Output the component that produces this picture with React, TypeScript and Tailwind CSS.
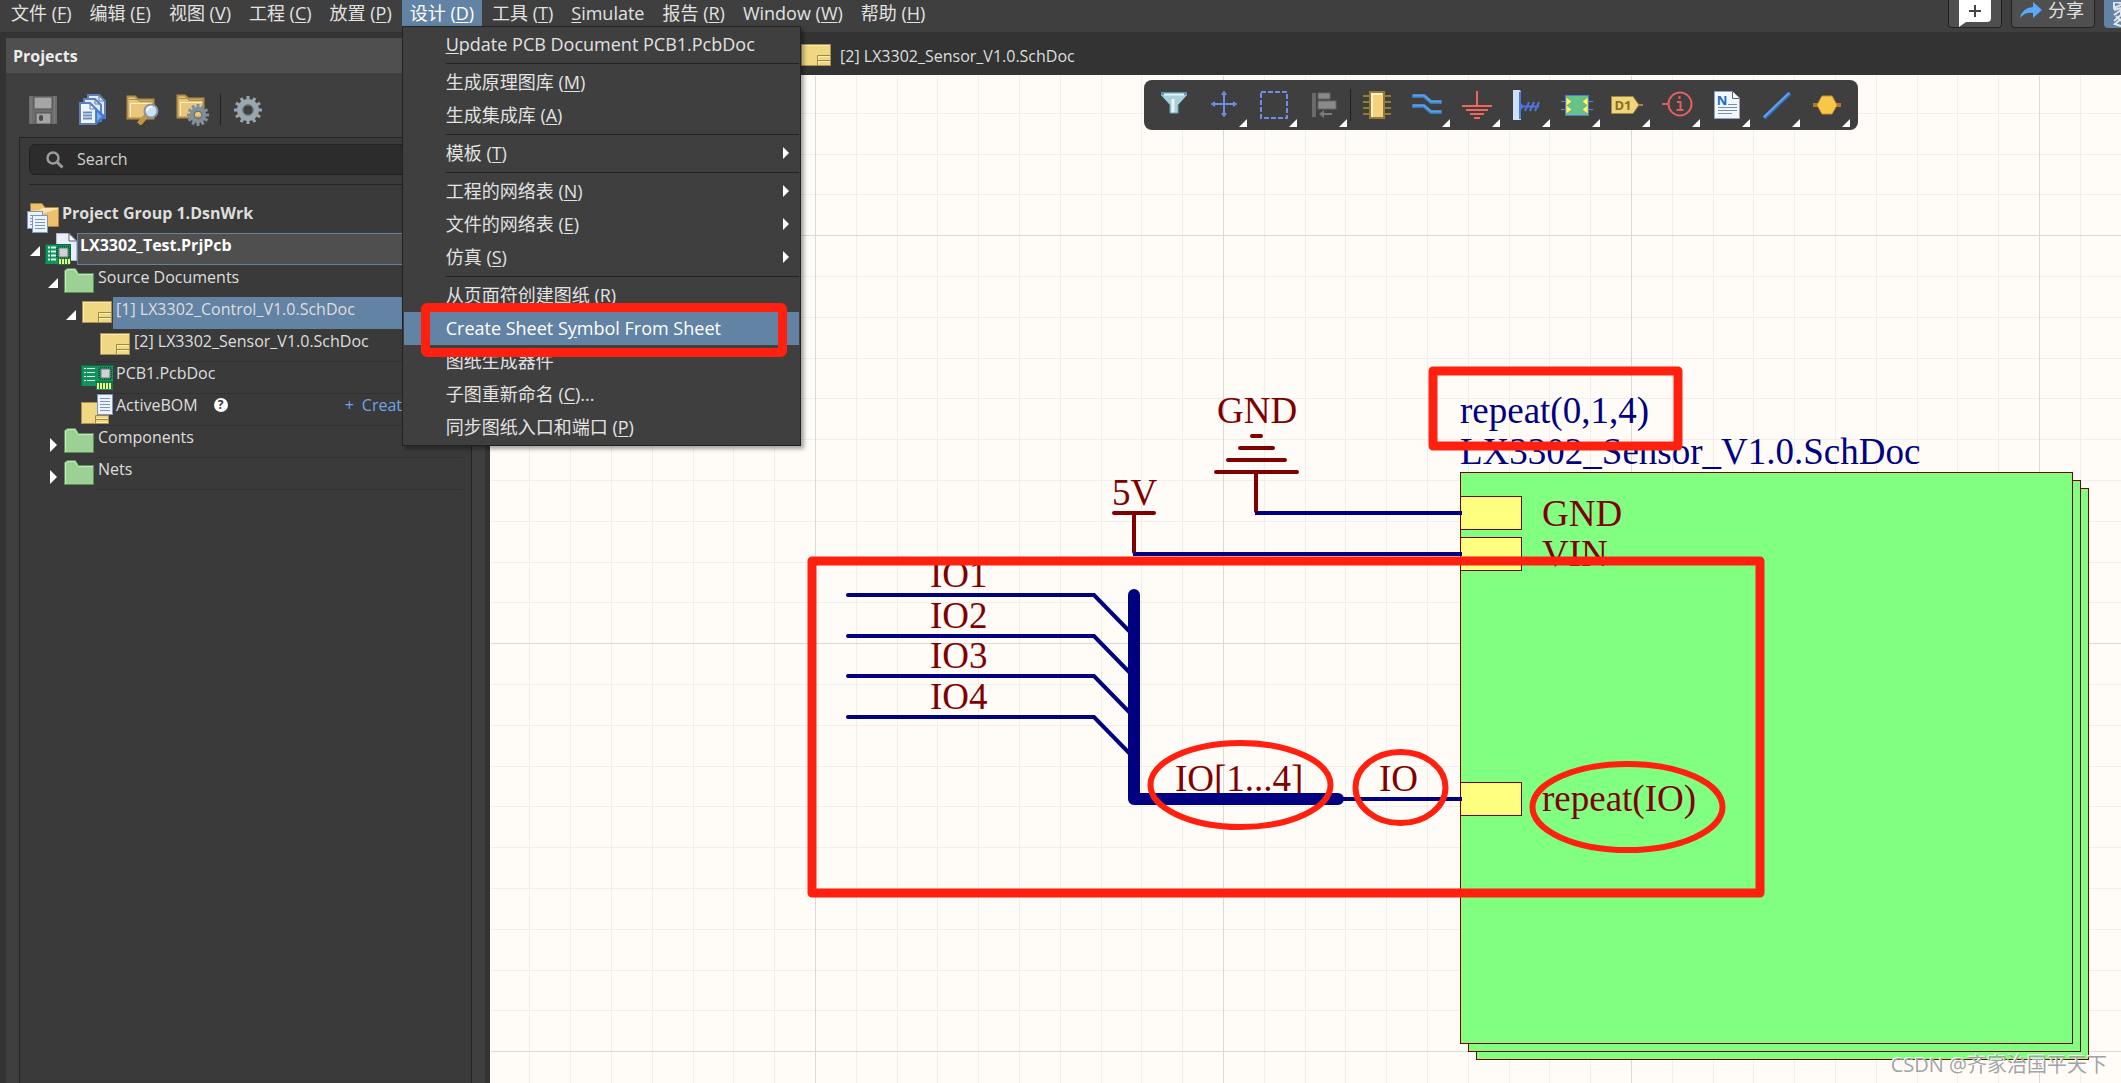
import type { ReactNode } from "react";

/* ---------- data ---------- */

type MenuEntry =
  | { kind: "sep" }
  | { kind: "item"; before: string; key?: string; after?: string; sub?: boolean; active?: boolean };

const menuBar = [
  { before: "文件 (", key: "F", after: ")" },
  { before: "编辑 (", key: "E", after: ")" },
  { before: "视图 (", key: "V", after: ")" },
  { before: "工程 (", key: "C", after: ")" },
  { before: "放置 (", key: "P", after: ")" },
  { before: "设计 (", key: "D", after: ")", open: true },
  { before: "工具 (", key: "T", after: ")" },
  { before: "", key: "S", after: "imulate" },
  { before: "报告 (", key: "R", after: ")" },
  { before: "Window (", key: "W", after: ")" },
  { before: "帮助 (", key: "H", after: ")" },
];

const designMenu: MenuEntry[] = [
  { kind: "item", before: "", key: "U", after: "pdate PCB Document PCB1.PcbDoc" },
  { kind: "sep" },
  { kind: "item", before: "生成原理图库 (", key: "M", after: ")" },
  { kind: "item", before: "生成集成库 (", key: "A", after: ")" },
  { kind: "sep" },
  { kind: "item", before: "模板 (", key: "T", after: ")", sub: true },
  { kind: "sep" },
  { kind: "item", before: "工程的网络表 (", key: "N", after: ")", sub: true },
  { kind: "item", before: "文件的网络表 (", key: "E", after: ")", sub: true },
  { kind: "item", before: "仿真 (", key: "S", after: ")", sub: true },
  { kind: "sep" },
  { kind: "item", before: "从页面符创建图纸 (", key: "R", after: ")" },
  { kind: "item", before: "Create Sheet S", key: "y", after: "mbol From Sheet", active: true },
  { kind: "item", before: "图纸生成器件" },
  { kind: "item", before: "子图重新命名 (", key: "C", after: ")..." },
  { kind: "item", before: "同步图纸入口和端口 (", key: "P", after: ")" },
];

/* ---------- panel icons ---------- */

function SheetIcon() {
  return (
    <svg width="32" height="32" viewBox="0 0 32 32" aria-hidden="true">
      <rect x="1.5" y="4.5" width="29" height="21" fill="#f0d784" stroke="#ab9250" />
      <path d="M2.500 24.500V5.500H29.500" fill="none" stroke="#fbe9ad" />
      <path d="M17.500 25.500V15.500H30.500M17.500 20.500H30.500" fill="none" stroke="#a1873f" />
      <path d="M18.500 19.500V16.500H29.500M18.500 24.500V21.500H29.500" fill="none" stroke="#ffefb8" />
    </svg>
  );
}

function FolderIcon() {
  return (
    <svg width="32" height="32" viewBox="0 0 32 32" aria-hidden="true">
      <path d="M1.500 27.500V5.500L4.500 3.500H12.500L15.500 8.500H30.500V27.500Z" fill="#9bd193" stroke="#5d8f58" />
      <path d="M2.500 27V6L5 4.500H12L15 9.500H30" fill="none" stroke="#c9ebc3" />
    </svg>
  );
}

function BoardArt({ wide }: { wide?: boolean }) {
  const w = wide ? 32 : 26;
  return (
    <g>
      <path d={wide ? "M0 0H32V25H15V21H0Z" : "M0 0H26V19H24V20H0Z"} fill="#12925c" />
      <path d={wide ? "M.5 20.500V.5H31.500" : "M.5 19V.5H25.500V18"} fill="none" stroke="#0a6b42" />
      {[4, 8, 12, 16].map((y) => (
        <path key={y} d={`M3 ${y - 0.5}h2M6 ${y - 0.5}h${wide ? 8 : 5}`} stroke="#e2f6ea" strokeWidth={wide ? 1 : 2} />
      ))}
      <path d={`M${w - 13} 3h12M${w - 13} 14h12M${w - 14} 4v10M${w - 2} 4v10`} stroke="#0b4f33" strokeWidth="2" strokeDasharray="1 1" />
      <rect x={w - 12} y="4" width="9" height="9" fill="#cfd2d4" stroke="#6d7a75" />
      <rect x={w - (wide ? 17 : 13)} y="16" width={wide ? 17 : 12} height={wide ? 8 : 5} fill="#0d7a4b" />
      {(wide ? [-4, -1, 2, 5, 8] : [0, 3, 6, 9]).map((dx) => (
        <rect key={dx} x={w - 12 + dx} y={wide ? 18 : 15} width="2" height={wide ? 6 : 5} fill="#f3f07b" />
      ))}
    </g>
  );
}

function BoardIcon() {
  return (
    <svg width="32" height="32" viewBox="0 0 32 32" aria-hidden="true">
      <g transform="translate(0 4)">
        <BoardArt wide />
      </g>
    </svg>
  );
}

function ProjectIcon() {
  return (
    <svg width="32" height="32" viewBox="0 0 32 32" aria-hidden="true">
      <path d="M11.500 .5H24L31.500 8V27.500H11.500Z" fill="#e9eef8" stroke="#b5b9cc" />
      <path d="M24 .5V8H31.500Z" fill="#ffffff" stroke="#5a5f77" />
      <g transform="translate(0 11)">
        <BoardArt />
      </g>
    </svg>
  );
}

function PageLines({ x, y, w, h }: { x: number; y: number; w: number; h: number }) {
  const rows = [4, 7, 10, 13, 16].filter((d) => d < h - 2);
  return (
    <g>
      <rect x={x + 0.5} y={y + 0.5} width={w} height={h} fill="#eaf3fc" stroke="#8095bd" />
      {rows.map((d) => (
        <path key={d} d={`M${x + 3} ${y + d}.5h${w - 5}`} stroke="#7f95b9" />
      ))}
    </g>
  );
}

function GroupIcon() {
  return (
    <svg width="32" height="32" viewBox="0 0 32 32" aria-hidden="true">
      <path d="M3.500 25.500V2.500H15L18 6.500H31.500V25.500Z" fill="#efc06b" stroke="#a8843f" />
      <path d="M4 10L12 9L16 7H31V8L14 13H4Z" fill="#fbe3ae" />
      <PageLines x={0} y={10} w={15} h={17} />
      <PageLines x={5} y={14} w={15} h={17} />
    </svg>
  );
}

function BomIcon() {
  return (
    <svg width="32" height="32" viewBox="0 0 32 32" aria-hidden="true">
      <rect x=".5" y="9.500" width="27" height="21" fill="#f0d784" stroke="#ab9250" />
      <path d="M14.500 30V22.500H27.500M14.500 26.500H27.500" fill="none" stroke="#a1873f" />
      <path d="M15.500 25.500H27M15.500 29.500H27" stroke="#ffefb8" />
      <PageLines x={16} y={1} w={15} h={20} />
    </svg>
  );
}

function Gear({ cx, cy, r, color }: { cx: number; cy: number; r: number; color: string }) {
  return (
    <g>
      {Array.from({ length: 12 }, (_, i) => (
        <rect key={i} x={cx - 1.500} y={cy - r - 3} width="3" height="4" fill={color} transform={`rotate(${i * 30} ${cx} ${cy})`} />
      ))}
      <circle cx={cx} cy={cy} r={r * 0.72} fill="none" stroke={color} strokeWidth={r * 0.56} />
      <circle cx={cx} cy={cy} r={r * 0.48} fill="none" stroke="#5d6a72" strokeWidth="1" />
    </g>
  );
}

function FolderArt() {
  return (
    <g>
      <path d="M1.500 23.500V1.500H9L12 4.500H27.500V23.500Z" fill="#e9c67e" stroke="#b18f4a" strokeWidth="2" />
      <path d="M4.500 22V8.500H26" fill="none" stroke="#fff0c4" />
      <path d="M3 4.500H12L13 6.500H27" fill="none" stroke="#b18f4a" />
    </g>
  );
}

/* ---------- tree ---------- */

type Row = {
  label: ReactNode;
  icon: ReactNode;
  pad: string;
  caret?: "open" | "closed" | "blank";
  look?: string;
  line?: boolean;
  extra?: ReactNode;
};

const rows: Row[] = [
  { label: "Project Group 1.DsnWrk", icon: <GroupIcon />, pad: "pl-[7px]", look: "font-bold" },
  {
    label: "LX3302_Test.PrjPcb",
    icon: <ProjectIcon />,
    pad: "pl-[10px]",
    caret: "open",
    look: "bg-[#4f4f4f] font-bold text-white ring-1 ring-[#6283a4] ring-inset",
  },
  { label: "Source Documents", icon: <FolderIcon />, pad: "pl-[28px]", caret: "open" },
  { label: "[1] LX3302_Control_V1.0.SchDoc", icon: <SheetIcon />, pad: "pl-[46px]", caret: "open", look: "bg-[#6283a4]" },
  { label: "[2] LX3302_Sensor_V1.0.SchDoc", icon: <SheetIcon />, pad: "pl-[64px]", caret: "blank", line: true },
  { label: "PCB1.PcbDoc", icon: <BoardIcon />, pad: "pl-[46px]", caret: "blank", line: true },
  {
    label: "ActiveBOM",
    icon: <BomIcon />,
    pad: "pl-[46px]",
    caret: "blank",
    line: true,
    extra: (
      <>
        <button
          type="button"
          aria-label="About ActiveBOM"
          className="mt-[5px] ml-4 flex size-[14px] items-center justify-center rounded-full bg-white text-xs leading-none font-bold text-[#333]"
        >
          ?
        </button>
        <a href="#create" className="mr-[60px] ml-auto flex gap-2 text-[#6fa5e8]">
          <span>+</span>
          Create
        </a>
      </>
    ),
  },
  { label: "Components", icon: <FolderIcon />, pad: "pl-[28px]", caret: "closed", line: true },
  { label: "Nets", icon: <FolderIcon />, pad: "pl-[28px]", caret: "closed", line: true },
];

function TreeRow({ row }: { row: Row }) {
  return (
    <li className={`relative flex h-8 items-start ${row.pad}`}>
      {row.caret && (
        <span className="flex h-8 w-[15px] shrink-0 items-center">
          {row.caret === "open" && (
            <svg width="10" height="10" className="mt-1" aria-hidden="true">
              <path d="M10 0V10H0Z" fill="#fff" />
            </svg>
          )}
          {row.caret === "closed" && (
            <svg width="9" height="14" className="mt-2" aria-hidden="true">
              <path d="M2 0L9 7L2 14Z" fill="#fff" />
            </svg>
          )}
        </span>
      )}
      <span className="w-8 shrink-0">{row.icon}</span>
      <span className={`flex h-8 min-w-0 flex-1 items-start pl-[3px] leading-6 whitespace-nowrap ${row.look ?? ""}`}>
        {row.label}
        {row.extra}
      </span>
      {row.line && <span className="absolute right-2 -bottom-px left-[75px] h-px bg-[#323232]" />}
    </li>
  );
}

function IconButton({ label, children }: { label: string; children: ReactNode }) {
  return (
    <button type="button" aria-label={label} className="flex w-[50px] shrink-0 items-center justify-center">
      {children}
    </button>
  );
}

function ProjectsPanel() {
  return (
    <aside className="flex w-[490px] shrink-0 bg-[#333] pt-[6px] pr-[5px] pl-[6px] text-[#dedede]">
      <div className="flex min-w-0 flex-1 flex-col bg-[#3f3f3f]">
        <h2 className="h-[35px] bg-[#4f4f4f] pl-[7px] text-base leading-9 font-bold text-[#ececec]">Projects</h2>
        <div className="flex h-[64px] items-center pt-[10px] pl-3">
          <IconButton label="Save">
            <svg width="28" height="28" viewBox="0 0 28 28" aria-hidden="true">
              <rect width="28" height="28" fill="#6c6c6c" />
              <rect x="5" y="1" width="18" height="12" fill="#a5a5a5" stroke="#505050" />
              <rect x="7" y="17" width="15" height="11" fill="#a5a5a5" stroke="#505050" />
              <rect x="10" y="19" width="4" height="6" rx="2" fill="#4a4a4a" />
              <path d="M2 1V27M25.500 1V27" stroke="#808080" />
            </svg>
          </IconButton>
          <IconButton label="Compile">
            <svg width="28" height="32" viewBox="0 0 28 32" aria-hidden="true">
              <path d="M9 1H20L26 7V24H9Z" fill="#dfeafa" stroke="#5d80b8" strokeWidth="2" />
              <path d="M5 5H16L22 11V27H5Z" fill="#dfeafa" stroke="#5d80b8" strokeWidth="2" />
              <path d="M1 9H11L17 15V30H1Z" fill="#eef5ff" stroke="#5d80b8" strokeWidth="2" />
              <path d="M11 9V15H17M16 5V10H22M20 1V7H26" fill="none" stroke="#5d80b8" />
              <path d="M4 18.500H13M4 21.500H13M4 24.500H13" stroke="#6a8cc4" strokeWidth="2" />
              <path d="M17 14L27 22.500L17 31Z" fill="#3f7ad0" />
              <path d="M18 18L23 22.500L18 27Z" fill="#7ba9e8" />
            </svg>
          </IconButton>
          <IconButton label="Explore folder">
            <svg width="34" height="30" viewBox="0 0 34 30" aria-hidden="true">
              <FolderArt />
              <path d="M13 29L21 20" stroke="#c29545" strokeWidth="5" />
              <circle cx="25" cy="16" r="6.500" fill="#cfe0f2" stroke="#8296a8" strokeWidth="2" />
              <path d="M21 16A4 4 0 0 1 26 12" fill="none" stroke="#fff" strokeWidth="2" />
            </svg>
          </IconButton>
          <IconButton label="Folder options">
            <svg width="34" height="32" viewBox="0 0 34 32" aria-hidden="true">
              <FolderArt />
              <Gear cx={22} cy={21} r={8} color="#81909a" />
            </svg>
          </IconButton>
          <span className="mx-[2px] h-8 w-px bg-[#222]" />
          <IconButton label="Settings">
            <svg width="28" height="28" viewBox="0 0 28 28" aria-hidden="true">
              <Gear cx={14} cy={14} r={11} color="#9aa5ad" />
            </svg>
          </IconButton>
        </div>
        <div className="mr-[13px] ml-[13px] flex-1 border border-b-0 border-[#242424] bg-[#3a3a3a]">
          <label className="mt-[6px] mr-2 ml-[9px] flex h-[31px] items-center rounded-md border border-[#222] bg-[#2c2c2c] pl-4">
            <svg width="18" height="18" viewBox="0 0 18 18" aria-hidden="true">
              <circle cx="7" cy="7" r="5.500" fill="none" stroke="#9b9b9b" strokeWidth="2.500" />
              <path d="M11 11L16.500 16.500" stroke="#9b9b9b" strokeWidth="3" />
            </svg>
            <input
              type="text"
              aria-label="Search"
              placeholder="Search"
              className="mb-[2px] ml-[13px] min-w-0 flex-1 bg-transparent text-base text-[#dedede] outline-none placeholder:text-[#d0d0d0]"
            />
          </label>
          <div className="mt-[9px] mr-2 ml-[9px] h-px bg-[#242424]" />
          <ul className="mt-4 text-base">
            {rows.map((row, i) => (
              <TreeRow key={i} row={row} />
            ))}
          </ul>
        </div>
      </div>
    </aside>
  );
}

/* ---------- menus ---------- */

function DesignMenu() {
  return (
    <div className="absolute top-[26px] left-0 z-20 w-[399px] border border-[#222] bg-[#3f3f3f] p-px shadow-[3px_3px_4px_rgba(0,0,0,0.35)]">
      <ul>
        {designMenu.map((entry, i) =>
          entry.kind === "sep" ? (
            <li key={i} className="flex h-[5px] items-center pl-[42px]">
              <span className="h-px w-full bg-[#222]" />
            </li>
          ) : (
            <li key={i}>
              <button
                type="button"
                className={`flex h-[33px] w-full items-center justify-between pr-[10px] pb-px pl-[42px] text-left whitespace-nowrap ${
                  entry.active ? "bg-[#6283a4] text-white" : ""
                }`}
              >
                <span>
                  {entry.before}
                  {entry.key && <u className="underline-offset-2">{entry.key}</u>}
                  {entry.after}
                </span>
                {entry.sub && (
                  <svg width="6" height="12" aria-hidden="true">
                    <path d="M0 0L6 6L0 12Z" fill="#fff" />
                  </svg>
                )}
              </button>
            </li>
          ),
        )}
      </ul>
      <div className="pointer-events-none absolute top-[276px] right-[13px] left-[18px] h-[54px] rounded-md border-[9px] border-[#ff2010]" />
    </div>
  );
}

function MenuBar() {
  return (
    <header className="relative z-20 flex h-8 shrink-0 bg-[#3f3f3f] text-[#e2e2e2]">
      <nav className="flex gap-[2px] pl-[3px] text-lg">
        {menuBar.map((m) => (
          <div key={m.key} className="relative h-[26px]">
            <button
              type="button"
              className={`block h-[26px] px-2 leading-5 whitespace-nowrap ${m.open ? "bg-[#6283a4] text-white" : ""}`}
            >
              {m.before}
              <u className="underline-offset-2">{m.key}</u>
              {m.after}
            </button>
            {m.open && <DesignMenu />}
          </div>
        ))}
      </nav>
      <div className="ml-auto flex h-[28px] gap-[9px]">
        <button type="button" aria-label="Add comment" className="flex w-[54px] justify-center rounded-b border border-t-0 border-[#222] bg-[#4f4f4f]">
          <svg width="32" height="27" viewBox="0 0 32 27" aria-hidden="true">
            <path d="M0 0H32V18Q32 22 28 22H7L0 27Z" fill="#fff" />
            <path d="M16 5V17M10 11H22" stroke="#444" strokeWidth="2" />
          </svg>
        </button>
        <button type="button" className="flex w-[84px] items-start gap-[6px] rounded-b border border-t-0 border-[#222] bg-[#4f4f4f] pl-2 text-lg leading-5">
          <svg width="22" height="18" viewBox="0 0 22 18" className="mt-px" aria-hidden="true">
            <path d="M13 1L22 9L13 17V12Q5 11 0 17Q2 7 13 6Z" fill="#5aa9f8" />
          </svg>
          分享
        </button>
        <button type="button" aria-label="Account" className="w-[17px] overflow-hidden rounded-bl bg-[#6283a4] pl-[9px]">
          <svg width="8" height="25" viewBox="0 0 8 25" aria-hidden="true">
            <path d="M8 1L1 0V6L8 3M1 8L8 6M1 13L8 8V13L1 19M8 17L2 22L8 24M3 14L8 19" fill="none" stroke="#dfe5ea" strokeWidth="2" />
          </svg>
        </button>
      </div>
    </header>
  );
}

/* ---------- active bar ---------- */

type Tool = { label: string; art: ReactNode; more?: boolean };

const tools: Tool[] = [
  {
    label: "Filter",
    art: (
      <>
        <path d="M3 5H29V8L20 18V26L12 26V18L3 8Z" fill="#a9cfdb" />
        <path d="M3 5H29V7L28 8H4L3 7Z" fill="#5f93b1" />
        <path d="M6 7.500H26" stroke="#e8f7fa" strokeWidth="2" />
        <path d="M15 12V26" stroke="#e5f4f7" strokeWidth="3" />
        <path d="M12 18V26H20V18" fill="none" stroke="#6fa3bd" />
      </>
    ),
  },
  {
    label: "Move",
    more: true,
    art: (
      <g stroke="#6c8de0" strokeWidth="2" fill="none">
        <path d="M16 6V28M5 17H27" />
        <path d="M16 3.500L19 8H13ZM16 30.500L13 26H19ZM2.500 17L7 14V20ZM29.500 17L25 20V14Z" fill="#6c8de0" stroke="none" />
      </g>
    ),
  },
  {
    label: "Select",
    more: true,
    art: <rect x="3" y="5" width="26" height="26" fill="none" stroke="#6c8de0" strokeWidth="2" strokeDasharray="5 2" />,
  },
  {
    label: "Align",
    more: true,
    art: (
      <>
        <rect x="4" y="6" width="4" height="24" fill="#6a6a6a" />
        <rect x="10" y="6" width="12" height="6" fill="#8a8a8a" stroke="#666" />
        <rect x="10" y="14" width="18" height="8" fill="#8a8a8a" stroke="#666" />
        <path d="M11 27L16 23V26H24V28H16V31Z" fill="#7a7a7a" />
      </>
    ),
  },
  {
    label: "Part",
    art: (
      <>
        <path d="M2 9H30M2 15H30M2 21H30M2 27H30" stroke="#947b38" strokeWidth="2" />
        <rect x="9" y="5" width="14" height="26" fill="#f6d27c" stroke="#947b38" strokeWidth="2" />
        <path d="M11 30V7H21" fill="none" stroke="#fff3cf" strokeWidth="2" />
      </>
    ),
  },
  {
    label: "Wire",
    more: true,
    art: (
      <g fill="none">
        <path d="M1 9H13L20 15H31M1 19H13L20 25H31" stroke="#3d76b4" strokeWidth="4" />
        <path d="M2 8.500H13L20 14.500H30M2 18.500H13L20 24.500H30" stroke="#5aa0e6" strokeWidth="2" />
      </g>
    ),
  },
  {
    label: "Power port",
    more: true,
    art: <path d="M16 4V19M1 19H31M5 23H27M9 27H23M13 31H19" stroke="#ef665c" strokeWidth="2" />,
  },
  {
    label: "Harness",
    more: true,
    art: (
      <>
        <path d="M2 3H8Q10 3 10 6V33H2Z" fill="#cfe0fb" />
        <path d="M9 5V32" stroke="#4d78d8" strokeWidth="2" />
        <path d="M10 16L13 19.500L10 23Z" fill="#4f74dc" />
        <path d="M11 19.500H28M14 24L18 15M19 24L23 15M24 24L28 15" fill="none" stroke="#4f74dc" strokeWidth="2" />
      </>
    ),
  },
  {
    label: "Sheet symbol",
    more: true,
    art: (
      <>
        <path d="M0 14.500H32M0 22.500H32" stroke="#5c86dd" />
        <rect x="4.500" y="8.500" width="23" height="20" fill="#66c28a" stroke="#4f7bd4" />
        <path d="M5 10L11 14.500L6 18.500L11 22.500L5 27ZM27 10L21 14.500L26 18.500L21 22.500L27 27Z" fill="#fbf96c" stroke="#5b8a6e" strokeWidth=".5" />
      </>
    ),
  },
  {
    label: "Port",
    more: true,
    art: (
      <>
        <path d="M26 18H32" stroke="#a08746" strokeWidth="2" />
        <path d="M.5 9.500H22L28 18L22 26.500H.5Z" fill="#f0d57c" stroke="#a08746" />
        <text x="12" y="23" textAnchor="middle" fontSize="13" fontWeight="700" fill="#8a6c22">
          D1
        </text>
      </>
    ),
  },
  {
    label: "Directive",
    more: true,
    art: (
      <>
        <circle cx="19" cy="17" r="11.500" fill="none" stroke="#e35f5f" strokeWidth="2" />
        <path d="M1 17H8" stroke="#e35f5f" strokeWidth="2" />
        <path d="M18.500 9V12M16 15H19.500V22M15.500 23H22.500" fill="none" stroke="#e35f5f" strokeWidth="2" />
      </>
    ),
  },
  {
    label: "Note",
    more: true,
    art: (
      <>
        <path d="M3.500 4.500H21L28.500 11V31.500H3.500Z" fill="#f1f7fe" stroke="#98a0bd" />
        <path d="M21.500 4.500V11.500H28.500" fill="#fff" stroke="#5c6276" />
        <text x="11" y="18" textAnchor="middle" fontSize="13" fontWeight="700" fill="#1d6bc8">
          N
        </text>
        <path d="M17 17.500H26M7 20.500H26M7 23.500H26M7 26.500H21" stroke="#7c8db2" />
      </>
    ),
  },
  {
    label: "Line",
    more: true,
    art: (
      <>
        <path d="M3 31L29 6" stroke="#3873b8" strokeWidth="4" />
        <path d="M3 30L28 6" stroke="#5fa4ea" strokeWidth="2" />
      </>
    ),
  },
  {
    label: "Mask",
    more: true,
    art: (
      <>
        <path d="M2 18H30" stroke="#b5772b" strokeWidth="4" />
        <path d="M11 9H21L26 18L21 27H11L6 18Z" fill="#f7c749" stroke="#c8932d" />
      </>
    ),
  },
];

function ActiveBar() {
  return (
    <div
      role="toolbar"
      aria-label="Active bar"
      className="absolute top-[5px] left-[654px] flex h-[50px] rounded-lg bg-[#3f3f3f] pr-[6px] pl-[5px]"
    >
      {tools.map((t, i) => (
        <div key={t.label} className="flex items-center">
          {i === 4 && <span className="mr-px ml-px h-8 w-px bg-[#1e1e1e]" />}
          <button type="button" aria-label={t.label} className="relative flex h-[50px] w-[50px] items-center justify-center pb-[2px]">
            <svg width="32" height="34" viewBox="0 0 32 34" aria-hidden="true">
              {t.art}
            </svg>
            {t.more && (
              <svg width="8" height="8" className="absolute right-[2px] bottom-[3px]" aria-hidden="true">
                <path d="M8 0V8H0Z" fill="#fff" />
              </svg>
            )}
          </button>
        </div>
      ))}
    </div>
  );
}

/* ---------- schematic ---------- */

const GRID = 40.8;

function Grid() {
  const cols = Array.from({ length: 100 }, (_, i) => i);
  return (
    <g shapeRendering="crispEdges">
      {cols.map((i) => (
        <line key={`v${i}`} x1={Math.round(407 + i * GRID) + 0.5} x2={Math.round(407 + i * GRID) + 0.5} y1="76" y2="3000" stroke="#efefec" />
      ))}
      {cols.map((i) => (
        <line key={`h${i}`} y1={Math.round(72 + i * GRID) + 0.5} y2={Math.round(72 + i * GRID) + 0.5} x1="491" x2="5000" stroke="#efefec" />
      ))}
      {cols.map((i) => (
        <line key={`V${i}`} x1={Math.round(407 + i * GRID * 10) + 0.5} x2={Math.round(407 + i * GRID * 10) + 0.5} y1="76" y2="3000" stroke="#d9d9d6" />
      ))}
      {cols.map((i) => (
        <line key={`H${i}`} y1={Math.round(235 + i * GRID * 10) + 0.5} y2={Math.round(235 + i * GRID * 10) + 0.5} x1="491" x2="5000" stroke="#d9d9d6" />
      ))}
    </g>
  );
}

function Schematic() {
  return (
    <svg className="absolute inset-0 size-full" role="img" aria-label="Schematic sheet">
      <g transform="translate(-490 -75)">
        <Grid />
        <g fill="#80ff80" stroke="#800000">
          <rect x="1476.500" y="488.500" width="612" height="571" />
          <rect x="1468.500" y="480.500" width="612" height="571" />
          <rect x="1460.500" y="472.500" width="612" height="571" />
          <g fill="#ffff80">
            <rect x="1460.500" y="496.500" width="61" height="33" />
            <rect x="1460.500" y="537.500" width="61" height="33" />
            <rect x="1460.500" y="782.500" width="61" height="33" />
          </g>
        </g>

        <g className="font-['Liberation_Serif',serif]" fontSize="37">
          <g fill="#000080">
            <text x="1460" y="423">repeat(0,1,4)</text>
            <text x="1460" y="464">LX3302_Sensor_V1.0.SchDoc</text>
          </g>
          <g fill="#800000">
            <text x="1217" y="423">GND</text>
            <text x="1112" y="505">5V</text>
            <text x="1542" y="526">GND</text>
            <text x="1542" y="566">VIN</text>
            <text x="1542" y="811">repeat(IO)</text>
            <text x="1379" y="791">IO</text>
            <text x="1175" y="791">IO[1...4]</text>
            <text x="930" y="587">IO1</text>
            <text x="930" y="628">IO2</text>
            <text x="930" y="668">IO3</text>
            <text x="930" y="709">IO4</text>
          </g>
        </g>

        <g stroke="#800000" strokeWidth="4" fill="none" strokeLinecap="round">
          <path d="M1252 436H1261M1240 448H1273M1228 460H1285M1216 472H1297M1256 472V511" />
          <path d="M1114 513H1154M1134 513V552" />
        </g>
        <g stroke="#000080" fill="none">
          <path d="M1255 513H1462M1133 554H1462M1340 799H1462" strokeWidth="4" />
          <path
            d="M848 595H1094L1134 636M848 636H1094L1134 677M848 676H1094L1134 717M848 717H1094L1134 758"
            strokeWidth="4"
            strokeLinecap="round"
          />
          <path d="M1134 595V799H1338" strokeWidth="12" strokeLinecap="round" strokeLinejoin="round" />
        </g>

        <g stroke="#ff2010" fill="none" strokeLinejoin="round">
          <rect x="812" y="561" width="948" height="332" strokeWidth="9" />
          <rect x="1433" y="371" width="245" height="75" strokeWidth="9" />
          <ellipse cx="1240.500" cy="785" rx="90" ry="42" strokeWidth="6" />
          <ellipse cx="1400.500" cy="787.500" rx="45" ry="35.500" strokeWidth="6" />
          <ellipse cx="1627.500" cy="807" rx="95" ry="43" strokeWidth="6" />
        </g>
      </g>
    </svg>
  );
}

export default function App() {
  return (
    <div className="flex h-screen flex-col overflow-hidden bg-[#333] font-['Open_Sans','Noto_Sans_CJK_SC',sans-serif]">
      <MenuBar />
      <div className="flex min-h-0 flex-1">
        <ProjectsPanel />
        <main className="flex min-w-0 flex-1 flex-col">
          <div role="tablist" className="flex h-[43px] shrink-0 pt-1 pl-[310px]">
            <button type="button" role="tab" className="flex items-center gap-2 text-base whitespace-nowrap text-[#dedede]">
              <SheetIcon />
              <span>[2] LX3302_Sensor_V1.0.SchDoc</span>
            </button>
          </div>
          <div className="relative flex-1 overflow-hidden bg-[#fffcf7]">
            <Schematic />
            <ActiveBar />
            <p className="absolute right-[14px] bottom-1 text-xl leading-7 text-[#a3a3a3] [text-shadow:-1px_-1px_0_#ffffff]">
              CSDN @齐家治国平天下
            </p>
          </div>
        </main>
      </div>
    </div>
  );
}
